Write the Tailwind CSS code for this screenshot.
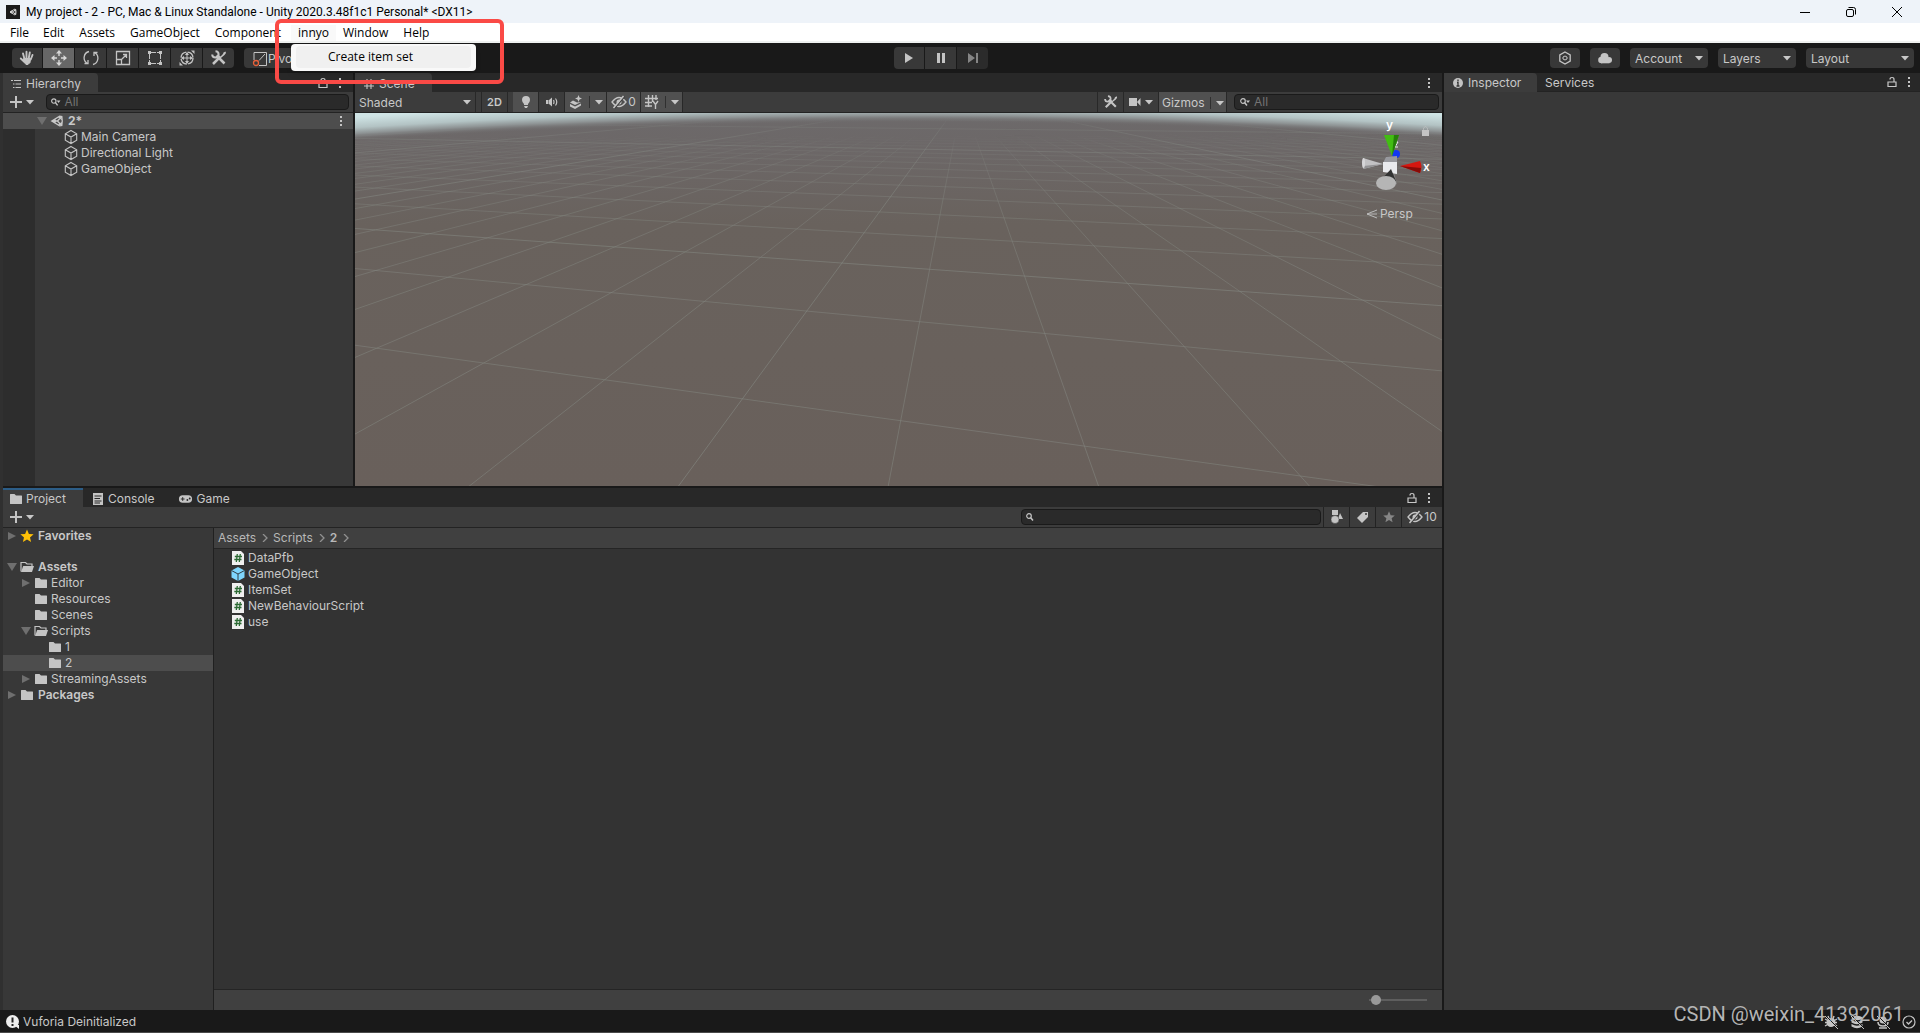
<!DOCTYPE html>
<html lang="en">
<head>
    <meta charset="UTF-8">
    <meta name="viewport" content="width=device-width, initial-scale=1.0">
    <title>My project - 2 - PC, Mac & Linux Standalone - Unity 2020.3.48f1c1 Personal* <DX11></title>
    <script src="https://cdn.jsdelivr.net/npm/@tailwindcss/browser@4"></script>
</head>
<body class="flex h-screen min-w-[1200px] flex-col overflow-hidden bg-[#191919] font-['Inter',sans-serif] text-[12px] leading-4 text-[#c8c8c8]">

    <!-- Icons -->
    <svg class="hidden">
        <symbol id="unity" viewBox="0 0 16 16"><path d="M2 8 11 2.500 13.500 3 14 8 13.500 13 11 13.500ZM2 8H8.500M8.500 8 12.800 3.500M8.500 8 12.800 12.500M5 5.500 6.500 8 5 10.500M10 3.500 14 6.500M10 12.500 14 9.500" fill="none" stroke="currentColor" stroke-width="1.500"/></symbol>
        <symbol id="folder" viewBox="0 0 16 16"><path d="M2 3.500Q2 3 2.500 3H6.500L8 4.500H13.500Q14 4.500 14 5V12.500Q14 13 13.500 13H2.500Q2 13 2 12.500Z" fill="#c4c4c4"/></symbol>
        <symbol id="folder-open" viewBox="0 0 16 16"><path d="M2 12.500V3.500H6.500L8 5H13V7" fill="none" stroke="#c4c4c4" stroke-width="1.200"/><path d="M4.200 7H15L13 13H2Z" fill="#c4c4c4"/></symbol>
        <symbol id="caret" viewBox="0 0 8 8"><path d="M0 2H8L4 6.500Z" fill="currentColor"/></symbol>
        <symbol id="arrow-right" viewBox="0 0 8 10"><path d="M0 1 8 5 0 9Z" fill="#6f6f6f"/></symbol>
        <symbol id="arrow-down" viewBox="0 0 10 8"><path d="M0 0H10L5 8Z" fill="#6f6f6f"/></symbol>
        <symbol id="cube" viewBox="0 0 16 16"><path d="M8 1.500 13.700 4.700V11.300L8 14.500 2.300 11.300V4.700ZM2.300 4.700 8 8 13.700 4.700M8 8V14.500" fill="none" stroke="#c4c4c4" stroke-width="1.100"/></symbol>
        <symbol id="prefab" viewBox="0 0 16 16"><path d="M8 1 14.500 4.500V11.500L8 15 1.500 11.500V4.500Z" fill="#7fd6fd"/><path d="M1.500 4.500 8 8 14.500 4.500M8 8V15" fill="none" stroke="#303e46"/></symbol>
        <symbol id="script" viewBox="0 0 16 16"><path d="M2 1H11L14 4V15H2Z" fill="#efefef"/><path d="M7.300 4 6.300 12M10.300 4 9.300 12M4.800 6.500H12M4.300 9.500H11.500" stroke="#2c6b34" stroke-width="1.300"/></symbol>
        <symbol id="lock" viewBox="0 0 10 12"><path d="M1 6H9V10.500H1ZM3 3.500Q3 1.500 5 1.500T7 3.500V6" fill="none" stroke="currentColor" stroke-width="1.200"/></symbol>
        <symbol id="dots" viewBox="0 0 4 12"><path d="M1 1H3V3H1ZM1 5H3V7H1ZM1 9H3V11H1Z" fill="#c4c4c4"/></symbol>
        <symbol id="plus" viewBox="0 0 12 12"><path d="M6 0V12M0 6H12" stroke="#c4c4c4" stroke-width="2"/></symbol>
        <symbol id="search" viewBox="0 0 12 10"><circle cx="4" cy="4" r="2.300" fill="none" stroke="#c4c4c4" stroke-width="1.200"/><path d="M5.700 5.700 8 8.500" stroke="#c4c4c4" stroke-width="1.500"/></symbol>
        <symbol id="search-drop" viewBox="0 0 12 10"><circle cx="4" cy="4" r="2.300" fill="none" stroke="#c4c4c4" stroke-width="1.200"/><path d="M5.700 5.700 8 8.500" stroke="#c4c4c4" stroke-width="1.500"/><path d="M7 3.500H11L9 6Z" fill="#c4c4c4"/></symbol>
        <symbol id="tools" viewBox="0 0 16 16"><path d="M2 14 9.500 6.500" stroke="#c4c4c4" stroke-width="2.500"/><path d="M9 7 12 4 12.500 2.500 14.500 1.500 15 3 13.500 5 9.800 8" fill="#c4c4c4"/><path d="M5.500 5.500 13.500 13.500" stroke="#c4c4c4" stroke-width="2.500"/><path d="M4.500 1.200A3.200 3.200 0 1 1 1.200 4.500" fill="none" stroke="#c4c4c4" stroke-width="2"/></symbol>
        <symbol id="eye-off" viewBox="0 0 16 16"><path d="M1 8Q4.500 3.500 8 3.500T15 8Q11.500 12.500 8 12.500T1 8Z" fill="none" stroke="#c4c4c4" stroke-width="1.300"/><circle cx="8" cy="8" r="2.500" fill="#c4c4c4"/><path d="M3.500 14.500 13.500 2.500" stroke="#404040" stroke-width="1.500"/><path d="M2.500 14 12.500 2" stroke="#c4c4c4" stroke-width="1.500"/></symbol>
        <symbol id="star" viewBox="0 0 16 16"><path d="M8 1.500 9.900 5.900 14.600 6.300 11 9.400 12.100 14 8 11.500 3.900 14 5 9.400 1.400 6.300 6.100 5.900Z" fill="currentColor"/></symbol>
        <symbol id="grid" viewBox="0 0 12 12"><path d="M4 1V11M8 1V11M1 4H11M1 8H11" stroke="#c4c4c4" stroke-width="1.100"/></symbol>
    </svg>

    <!-- Title Bar -->
    <header class="flex h-[23px] shrink-0 items-center bg-[#eef3f9] pl-[6px] text-black">
        <span class="mr-[6px] flex h-[14px] w-[14px] items-center justify-center bg-[#1b1b1b]"><svg class="h-2 w-2 text-white"><use href="#unity"/></svg></span>
        <h1 class="pt-px font-['Roboto',sans-serif] text-[12px]">My project - 2 - PC, Mac &amp; Linux Standalone - Unity 2020.3.48f1c1 Personal* &lt;DX11&gt;</h1>
        <div class="ml-auto flex">
            <button aria-label="Minimize" class="flex h-5 w-[46px] items-center justify-center"><svg class="h-3 w-3" viewBox="0 0 12 12"><path d="M1 6.500H11" stroke="#000"/></svg></button>
            <button aria-label="Restore" class="flex h-5 w-[46px] items-center justify-center"><svg class="h-3 w-3" viewBox="0 0 12 12" fill="none" stroke="#000"><rect x="1.500" y="3.500" width="7" height="7" rx="1.500"/><path d="M3.500 1.500H8.500Q10.500 1.500 10.500 3.500V8.500"/></svg></button>
            <button aria-label="Close" class="flex h-5 w-[46px] items-center justify-center"><svg class="h-3 w-3" viewBox="0 0 12 12"><path d="M1 1 11 11M11 1 1 11" stroke="#000"/></svg></button>
        </div>
    </header>

    <!-- Menu Bar -->
    <nav class="relative z-20 flex h-5 shrink-0 items-center border-b-2 border-[#eff1f0] bg-white pt-[2px] pl-[3px] font-['Open_Sans','Noto_Sans',sans-serif] text-[12px] text-black">
        <button class="px-[7px]">File</button>
        <button class="px-[7px]">Edit</button>
        <button class="px-[8px]">Assets</button>
        <button class="px-[7px]">GameObject</button>
        <button class="px-[8px]">Component</button>
        <div class="relative ml-[2px]">
            <button class="bg-[#f9f9f9] px-[7px]">innyo</button>
            <div class="absolute top-[19px] left-0 h-[27px] w-[185px] rounded bg-[#f9f9f9] px-[5px] pt-[2px] shadow-md">
                <button class="h-[22px] w-full rounded bg-[#f0f0f0] pl-8 text-left">Create item set</button>
            </div>
        </div>
        <button class="px-[7px]">Window</button>
        <button class="px-[8px]">Help</button>
        <!-- Highlight frame -->
        <div class="pointer-events-none absolute -top-1 left-[275px] h-[65px] w-[229px] rounded-md border-4 border-[#fa4a46]"></div>
    </nav>

    <!-- Toolbar -->
    <div class="flex h-[30px] shrink-0 items-center justify-between pr-[6px] pl-3">
        <div class="flex flex-1 items-center">
            <div class="flex gap-px">
                <button aria-label="Hand" class="flex h-5 w-[30px] items-center justify-center rounded-l-sm bg-[#383838]"><svg class="h-4 w-4" viewBox="0 0 16 16" stroke="#c4c4c4" stroke-linecap="round" fill="none"><path d="M5.500 9 4 3.500M7.500 8V1.800M9.800 8 10.800 2.500M11.700 9.500 13.500 5M5 11.500 1.800 8.500" stroke-width="1.900"/><path d="M5 8.500H11.500L11 12.500 9 14.500H7L4.500 11.500Z" fill="#c4c4c4"/></svg></button>
                <button aria-label="Move" class="flex h-5 w-[31px] items-center justify-center bg-[#676767]"><svg class="h-4 w-4" viewBox="0 0 16 16"><path d="M8 3V6M8 10V13M3 8H6M10 8H13" stroke="#d8d8d8" stroke-width="1.400"/><path d="M8 0 11 3.500H5ZM8 16 5 12.500H11ZM0 8 3.500 5V11ZM16 8 12.500 11V5Z" fill="#d8d8d8"/></svg></button>
                <button aria-label="Rotate" class="flex h-5 w-[31px] items-center justify-center bg-[#383838]"><svg class="h-4 w-4" viewBox="0 0 16 16" fill="none" stroke="#c4c4c4" stroke-width="1.300"><path d="M6 1.500A6.500 6.500 0 0 0 4.500 13.500M1.500 13.500H5V10M10 14.500A6.500 6.500 0 0 0 11.500 2.500M14.500 2.500H11V6"/></svg></button>
                <button aria-label="Scale" class="flex h-5 w-[31px] items-center justify-center bg-[#383838]"><svg class="h-4 w-4" viewBox="0 0 16 16" fill="none" stroke="#c4c4c4" stroke-width="1.300"><path d="M1.500 1.500H14.500V14.500H1.500ZM1.500 9.500H6.500V14.500M7 9 11.500 4.500M8 4.500H11.500V8"/></svg></button>
                <button aria-label="Rect" class="flex h-5 w-[31px] items-center justify-center bg-[#383838]"><svg class="h-4 w-4" viewBox="0 0 16 16"><path d="M2.500 3V13M13.500 3V13M3 2.500H13M3 13.500H13" stroke="#c4c4c4" stroke-dasharray="6 1"/><path d="M1 1H4V4H1ZM12 1H15V4H12ZM1 12H4V15H1ZM12 12H15V15H12Z" fill="#c4c4c4"/></svg></button>
                <button aria-label="Transform" class="flex h-5 w-[31px] items-center justify-center bg-[#383838]"><svg class="h-4 w-4" viewBox="0 0 16 16" fill="none" stroke="#c4c4c4"><circle cx="8" cy="8" r="6" stroke-width="1.300" stroke-dasharray="8 1.400"/><path d="M8 3V13M3 8H13"/><path d="M8 2 10 5H6ZM8 14 6 11H10ZM2 8 5 6V10ZM14 8 11 10V6ZM12 .500H15.500V4ZM.500 12V15.500H4Z" fill="#c4c4c4" stroke="none"/></svg></button>
                <button aria-label="Custom tools" class="flex h-5 w-[31px] items-center justify-center rounded-r-sm bg-[#383838]"><svg class="h-4 w-4"><use href="#tools"/></svg></button>
            </div>
            <button class="ml-[10px] flex h-5 w-[72px] items-center rounded-sm bg-[#383838] pt-px pl-2"><svg class="h-4 w-4" viewBox="0 0 16 16" fill="none" stroke="#c4c4c4"><path d="M2 9V1.500H14.500V14.500H7M7 9.500 13 3"/><circle cx="4" cy="12" r="2.500" stroke="#e8613a" stroke-width="1.300"/></svg>Pivot</button>
        </div>
        <div class="mr-11 flex gap-px">
            <button aria-label="Play" class="flex h-[22px] w-[30px] items-center justify-center rounded-l-sm bg-[#383838]"><svg class="h-[10px] w-2" viewBox="0 0 8 10"><path d="M0 0 8 5 0 10Z" fill="#c4c4c4"/></svg></button>
            <button aria-label="Pause" class="flex h-[22px] w-[31px] items-center justify-center bg-[#383838]"><svg class="h-[10px] w-2" viewBox="0 0 8 10"><path d="M0 0H3V10H0ZM5 0H8V10H5Z" fill="#c4c4c4"/></svg></button>
            <button aria-label="Step" class="flex h-[22px] w-[31px] items-center justify-center rounded-r-sm bg-[#2b2b2b]"><svg class="h-[10px] w-[10px]" viewBox="0 0 10 10"><path d="M0 0 7 5 0 10ZM8 0H10V10H8Z" fill="#858585"/></svg></button>
        </div>
        <div class="flex flex-1 items-center justify-end gap-[10px]">
            <button aria-label="Package" class="flex h-5 w-[30px] items-center justify-center rounded-sm bg-[#383838]"><svg class="h-[14px] w-[14px]" viewBox="0 0 14 14" fill="none" stroke="#c4c4c4"><path d="M7 1 12.200 4V10L7 13 1.800 10V4Z" stroke-width="1.300"/><path d="M7 5 9 6V8L7 9 5 8V6Z"/></svg></button>
            <button aria-label="Cloud" class="flex h-5 w-[30px] items-center justify-center rounded-sm bg-[#383838]"><svg class="h-4 w-4" viewBox="0 0 16 16" fill="#c4c4c4"><circle cx="4.500" cy="10" r="3.300"/><circle cx="7.500" cy="7" r="4"/><circle cx="12" cy="10" r="3"/><rect x="4" y="9" width="8.500" height="4.300"/></svg></button>
            <div class="relative flex items-center"><select aria-label="Account" class="h-5 w-[78px] appearance-none rounded-sm bg-[#383838] pt-px pl-[5px]"><option>Account</option></select><svg class="pointer-events-none absolute right-[5px] h-2 w-2"><use href="#caret"/></svg></div>
            <div class="relative flex items-center"><select aria-label="Layers" class="h-5 w-[78px] appearance-none rounded-sm bg-[#383838] pt-px pl-[5px]"><option>Layers</option></select><svg class="pointer-events-none absolute right-[5px] h-2 w-2"><use href="#caret"/></svg></div>
            <div class="relative flex items-center"><select aria-label="Layout" class="h-5 w-[108px] appearance-none rounded-sm bg-[#383838] pt-px pl-[5px]"><option>Layout</option></select><svg class="pointer-events-none absolute right-[5px] h-2 w-2"><use href="#caret"/></svg></div>
        </div>
    </div>

    <!-- Docked Panels -->
    <main class="flex min-h-0 flex-1 gap-[2px] border-l-[3px] border-[#303030]">
        <div class="flex min-w-0 flex-[1439_1_0%] flex-col gap-[2px]">
            <div class="flex min-h-0 flex-[413_1_0%] gap-[2px]">

                <!-- Hierarchy -->
                <section class="flex w-[350px] shrink-0 flex-col bg-[#383838]">
                    <div class="flex h-[19px] items-center bg-[#282828] pr-[11px]">
                        <h2 class="flex h-full w-[95px] items-center rounded-tr-sm bg-[#3c3c3c] pt-[2px] pl-2"><svg class="mr-[5px] h-[10px] w-[10px]" viewBox="0 0 10 10"><path d="M0 1.500H2M3 1.500H10M2 5H3.500M4.500 5H10M2 8.500H3.500M4.500 8.500H10" stroke="#c4c4c4"/></svg>Hierarchy</h2>
                        <svg class="mr-[10px] ml-auto h-3 w-[10px]"><use href="#lock"/></svg>
                        <svg class="h-3 w-1"><use href="#dots"/></svg>
                    </div>
                    <div class="flex h-[21px] items-center border-b border-[#232323] bg-[#3c3c3c] pr-1 pl-[7px]">
                        <button aria-label="Create" class="flex items-center gap-1"><svg class="h-3 w-3"><use href="#plus"/></svg><svg class="h-2 w-2"><use href="#caret"/></svg></button>
                        <label class="ml-[12px] flex h-4 flex-1 items-center rounded border border-[#1a1a1a] bg-[#2a2a2a] pl-[3px]"><svg class="mr-[3px] h-[10px] w-3"><use href="#search-drop"/></svg><input type="text" aria-label="Search hierarchy" placeholder="All" class="w-full leading-[14px] outline-none placeholder:text-[#747474]"></label>
                    </div>
                    <div class="relative flex-1 before:absolute before:top-0 before:bottom-0 before:w-8 before:bg-[#2d2d2d]">
                        <div class="relative flex h-4 items-center bg-[#4d4d4d] pr-[10px] pl-[34px] font-bold"><svg class="mr-[3px] h-2 w-[10px]"><use href="#arrow-down"/></svg><svg class="mr-[4px] h-[14px] w-[14px]"><use href="#unity"/></svg>2*<svg class="ml-auto h-3 w-1"><use href="#dots"/></svg></div>
                        <ul class="relative pl-[60px]">
                            <li class="flex h-4 items-center gap-[2px]"><svg class="h-4 w-4"><use href="#cube"/></svg>Main Camera</li>
                            <li class="flex h-4 items-center gap-[2px]"><svg class="h-4 w-4"><use href="#cube"/></svg>Directional Light</li>
                            <li class="flex h-4 items-center gap-[2px]"><svg class="h-4 w-4"><use href="#cube"/></svg>GameObject</li>
                        </ul>
                    </div>
                </section>

                <!-- Scene -->
                <section class="flex min-w-0 flex-1 flex-col bg-[#383838]">
                    <div class="flex h-[19px] shrink-0 items-center bg-[#282828] pr-[11px]">
                        <h2 class="flex h-full w-[77px] items-center rounded-tr-sm bg-[#3c3c3c] pt-[2px] pl-2"><svg class="mr-1 h-3 w-3"><use href="#grid"/></svg>Scene</h2>
                        <svg class="ml-auto h-3 w-1"><use href="#dots"/></svg>
                    </div>
                    <div class="flex h-[21px] shrink-0 border-b border-[#232323] bg-[#3c3c3c]">
                        <div class="relative flex items-center"><select aria-label="Draw mode" class="h-5 w-[121px] appearance-none border-r border-[#282828] pt-px pl-1"><option>Shaded</option></select><svg class="pointer-events-none absolute right-[5px] h-2 w-2"><use href="#caret"/></svg></div>
                        <button class="ml-[5px] w-[27px] border-x border-[#282828] text-[11px] font-semibold">2D</button>
                        <button aria-label="Lighting" class="ml-[5px] flex w-[26px] items-center justify-center border-r border-[#282828] bg-[#505050]"><svg class="h-3 w-3" viewBox="0 0 12 12"><path d="M6 0A4 4 0 0 1 10 4Q10 6 8 8V9H4V8Q2 6 2 4A4 4 0 0 1 6 0ZM4 10H8L7 12H5Z" fill="#c4c4c4"/></svg></button>
                        <button aria-label="Audio" class="flex w-[26px] items-center justify-center border-r border-[#282828]"><svg class="h-3 w-3" viewBox="0 0 12 12"><path d="M0 4H2.500V8H0ZM3 4 6 1.500V10.500L3 8Z" fill="#c4c4c4"/><path d="M7.500 4Q8.500 6 7.500 8M9.500 2.500Q12 6 9.500 9.500" stroke="#c4c4c4" stroke-width="1.200" fill="none"/></svg></button>
                        <button aria-label="Effects" class="flex w-[42px] items-center border-r border-[#282828] bg-[#505050] pl-1"><svg class="h-[14px] w-[14px]" viewBox="0 0 14 14"><path d="M1 7.500 4 5.500 8 7.500 12 7 6 10ZM1 9 6 11.500 12 8.500V10.500L6 14 1 11.500Z" fill="#c4c4c4"/><path d="M9.500 0 10.500 2.500 13 3.500 10.500 4.500 9.500 7 8.500 4.500 6 3.500 8.500 2.500Z" fill="#c4c4c4"/></svg><span class="mr-[5px] ml-[6px] h-3 w-px bg-[#303030]"></span><svg class="h-2 w-2"><use href="#caret"/></svg></button>
                        <button class="flex w-[34px] items-center justify-center gap-px border-r border-[#282828] bg-[#505050]"><svg class="h-4 w-4"><use href="#eye-off"/></svg>0</button>
                        <button aria-label="Grid axis" class="flex w-[42px] items-center border-r border-[#282828] bg-[#505050] pl-1"><svg class="h-[14px] w-[14px]" viewBox="0 0 14 14"><path d="M3.500 0V12M7.500 0V7M11 0V5M0 3.500H13M0 7.500H7M0 11H7M8 6 10.500 9.500 13 6M10.500 9.500V14" fill="none" stroke="#c4c4c4" stroke-width="1.400"/></svg><span class="mr-[5px] ml-[6px] h-3 w-px bg-[#303030]"></span><svg class="h-2 w-2"><use href="#caret"/></svg></button>
                        <button aria-label="Component tools" class="ml-auto flex w-[27px] items-center justify-center border-x border-[#282828]"><svg class="h-[14px] w-[14px]"><use href="#tools"/></svg></button>
                        <button aria-label="Camera" class="flex w-[35px] items-center justify-center gap-1 border-r border-[#282828]"><svg class="h-3 w-3" viewBox="0 0 12 12"><path d="M0 2H8V10H0ZM8 6 11.500 2V10Z" fill="#c4c4c4"/></svg><svg class="h-2 w-2"><use href="#caret"/></svg></button>
                        <button class="flex w-[68px] items-center border-r border-[#282828] bg-[#505050] pt-px pl-[3px]">Gizmos<span class="mx-[5px] h-3 w-px bg-[#303030]"></span><svg class="h-2 w-2 shrink-0"><use href="#caret"/></svg></button>
                        <label class="mt-[2px] mr-[3px] ml-[7px] flex h-4 w-[205px] items-center rounded border border-[#1a1a1a] bg-[#2a2a2a] pl-1"><svg class="mr-[3px] h-[10px] w-3 shrink-0"><use href="#search-drop"/></svg><input type="text" aria-label="Search scene" placeholder="All" class="w-full leading-[14px] outline-none placeholder:text-[#747474]"></label>
                    </div>
                    <div class="relative min-h-0 flex-1 overflow-hidden">
                        <svg class="h-full w-full" viewBox="0 0 1087 373" preserveAspectRatio="xMidYMid slice">
                            <defs>
                                <linearGradient id="ground" x1="0" y1="0" x2="0" y2="1"><stop offset="0" stop-color="#6d6a6b"/><stop offset=".1" stop-color="#6c6767"/><stop offset=".3" stop-color="#69625d"/><stop offset="1" stop-color="#69605b"/></linearGradient>
                                <radialGradient id="sky" gradientUnits="userSpaceOnUse" cx="560" cy="8680" r="8700"><stop offset=".9966" stop-color="#6d6a6b" stop-opacity="0"/><stop offset=".9974" stop-color="#8d9293"/><stop offset=".9981" stop-color="#b3c3c4"/><stop offset=".9993" stop-color="#cfe4e5"/></radialGradient>
                            </defs>
                            <rect width="1087" height="373" fill="url(#ground)"/>
                            <g id="floorGrid" stroke="#8c938c" fill="none"></g>
                            <rect width="1087" height="40" fill="url(#sky)"/>
                        </svg>
                        <!-- Orientation gizmo -->
                        <svg class="absolute top-0 right-0 h-[120px] w-[92px]" viewBox="0 0 92 120">
                            <path d="M13 45 33 51 13 56Z" fill="#c2c2c4"/><path d="M13 53 33 51 13 56Z" fill="#929294"/><ellipse cx="13.500" cy="50" rx="1.500" ry="5" fill="#d6d6d8"/>
                            <path d="M44 60 47 71 38 75Z" fill="#858585"/>
                            <circle cx="46" cy="41" r="4" fill="#1238ef"/><path d="M45 29H48L45 34H48" stroke="#eee" fill="none"/>
                            <path d="M36 44 47 43 47 49 33 50Z" fill="#98999e"/><path d="M33 49H47V61L33 59Z" fill="#e9eaed"/>
                            <path d="M34 22H49L42 43Z" fill="#42bd13"/><path d="M44 22H49L42 43Z" fill="#257f09"/>
                            <path d="M50 53 70 48Q73 54 70 60Z" fill="#d51710"/><path d="M50 53 71 55 70 60Z" fill="#870b08"/>
                            <path d="M41 56 46 68 30 68Z" fill="#333"/><ellipse cx="36" cy="70" rx="10" ry="7" fill="#b5b5b5"/>
                            <text x="36" y="16" fill="#fff" font-family="Inter" font-size="12" font-weight="600">y</text>
                            <text x="73" y="58" fill="#fff" font-family="Inter" font-size="12" font-weight="600">x</text>
                            <path d="M72 17H79V23H72Z" fill="#c4c4c4"/><path d="M73.500 17V15Q75.500 12 77.500 15V17" fill="none" stroke="#c4c4c4" stroke-opacity=".6"/>
                            <path d="M27 97 17 101 27 105M17 101H27" fill="none" stroke="#bbb"/>
                            <text x="30" y="105" fill="#c8c8c8" font-family="Inter" font-size="12">Persp</text>
                        </svg>
                    </div>
                </section>
            </div>

            <!-- Project -->
            <section class="flex min-h-0 flex-[522_1_0%] flex-col bg-[#383838]">
                <div class="flex h-[19px] shrink-0 items-center bg-[#282828] pr-[11px]">
                    <button class="flex h-full w-20 items-center border-t-2 border-[#2c5d87] bg-[#3c3c3c] pl-[5px]"><svg class="mr-[2px] h-4 w-4"><use href="#folder"/></svg>Project</button>
                    <button class="flex h-full items-center pt-[2px] pl-[9px]"><svg class="mr-1 h-3 w-3" viewBox="0 0 12 12"><path d="M1 0H11V12H1Z" fill="#c4c4c4"/><path d="M2.500 3H9.500M2.500 5.500H8M2.500 8H9.500M2.500 10H8" stroke="#282828"/></svg>Console</button>
                    <button class="flex h-full items-center pt-[2px] pl-6"><svg class="mr-[3px] h-4 w-[15px]" viewBox="0 0 16 16"><rect x="1" y="4" width="14" height="8" rx="4" fill="#c4c4c4"/><path d="M3 8H7M5 6V10" stroke="#282828"/><circle cx="10" cy="9" r="1" fill="#282828"/><circle cx="12.500" cy="7.500" r="1" fill="#282828"/></svg>Game</button>
                    <svg class="mr-[10px] ml-auto h-3 w-[10px]"><use href="#lock"/></svg>
                    <svg class="h-3 w-1"><use href="#dots"/></svg>
                </div>
                <div class="flex h-[21px] shrink-0 border-b border-[#232323] bg-[#3c3c3c] pl-[7px]">
                    <button aria-label="Add asset" class="flex items-center gap-1"><svg class="h-3 w-3"><use href="#plus"/></svg><svg class="h-2 w-2"><use href="#caret"/></svg></button>
                    <label class="mt-[2px] ml-auto flex h-4 w-[300px] items-center rounded border border-[#1a1a1a] bg-[#2a2a2a] pl-[3px]"><svg class="mr-1 h-[10px] w-3 shrink-0"><use href="#search"/></svg><input type="text" aria-label="Search project" class="w-full leading-[14px] outline-none"></label>
                    <button aria-label="Filter by type" class="ml-[2px] flex w-[26px] items-center justify-center border-l border-[#232323]"><svg class="h-[14px] w-[14px]" viewBox="0 0 14 14" fill="#c4c4c4"><path d="M2 0H8V5H2ZM10 3 13 9H8Z"/><circle cx="5" cy="9.500" r="4" stroke="#3c3c3c" stroke-width=".500"/></svg></button>
                    <button aria-label="Filter by label" class="flex w-[26px] items-center justify-center border-l border-[#232323]"><svg class="h-3 w-3" viewBox="0 0 12 12"><path d="M6 1H11V6L5 12 0 7Z" fill="#c4c4c4"/><circle cx="9" cy="3" r="1" fill="#383838"/></svg></button>
                    <button aria-label="Save search" class="flex w-[26px] items-center justify-center border-l border-[#232323] text-[#868686]"><svg class="h-[14px] w-[14px]"><use href="#star"/></svg></button>
                    <button class="flex w-[41px] items-center justify-center gap-px border-l border-[#232323]"><svg class="h-4 w-4"><use href="#eye-off"/></svg>10</button>
                </div>
                <div class="flex min-h-0 flex-1">
                    <ul class="w-[211px] shrink-0 border-r border-[#202020]">
                        <li class="flex h-4 items-center pl-[5px] font-semibold"><svg class="mr-[3px] h-[10px] w-2"><use href="#arrow-right"/></svg><svg class="mr-[3px] h-4 w-4 text-[#ffc107]"><use href="#star"/></svg>Favorites</li>
                        <li class="mt-[15px] flex h-4 items-center pl-1 font-semibold"><svg class="mr-[2px] h-2 w-[10px]"><use href="#arrow-down"/></svg><svg class="mr-[3px] h-4 w-4"><use href="#folder-open"/></svg>Assets</li>
                        <li class="flex h-4 items-center pl-[19px]"><svg class="mr-[3px] h-[10px] w-2"><use href="#arrow-right"/></svg><svg class="mr-[2px] h-4 w-4"><use href="#folder"/></svg>Editor</li>
                        <li class="flex h-4 items-center pl-[30px]"><svg class="mr-[2px] h-4 w-4"><use href="#folder"/></svg>Resources</li>
                        <li class="flex h-4 items-center pl-[30px]"><svg class="mr-[2px] h-4 w-4"><use href="#folder"/></svg>Scenes</li>
                        <li class="flex h-4 items-center pl-[18px]"><svg class="mr-[2px] h-2 w-[10px]"><use href="#arrow-down"/></svg><svg class="mr-[2px] h-4 w-4"><use href="#folder-open"/></svg>Scripts</li>
                        <li class="flex h-4 items-center pl-[44px]"><svg class="mr-[2px] h-4 w-4"><use href="#folder"/></svg>1</li>
                        <li class="flex h-4 items-center bg-[#4d4d4d] pl-[44px]"><svg class="mr-[2px] h-4 w-4"><use href="#folder"/></svg>2</li>
                        <li class="flex h-4 items-center pl-[19px]"><svg class="mr-[3px] h-[10px] w-2"><use href="#arrow-right"/></svg><svg class="mr-[2px] h-4 w-4"><use href="#folder"/></svg>StreamingAssets</li>
                        <li class="flex h-4 items-center pl-[5px] font-semibold"><svg class="mr-[3px] h-[10px] w-2"><use href="#arrow-right"/></svg><svg class="mr-[3px] h-4 w-4"><use href="#folder"/></svg>Packages</li>
                    </ul>
                    <div class="flex min-w-0 flex-1 flex-col bg-[#333333]">
                        <div class="flex h-[21px] shrink-0 items-center border-b border-[#252525] bg-[#404040] pl-1 text-[#b8b8b8]">
                            <a href="#">Assets</a>
                            <svg class="mr-[5px] ml-[6px] h-2 w-[6px]" viewBox="0 0 6 8"><path d="M1 0 5 4 1 8" fill="none" stroke="#909090" stroke-width="1.300"/></svg>
                            <a href="#">Scripts</a>
                            <svg class="mr-[5px] ml-[6px] h-2 w-[6px]" viewBox="0 0 6 8"><path d="M1 0 5 4 1 8" fill="none" stroke="#909090" stroke-width="1.300"/></svg>
                            <a href="#" class="font-semibold">2</a>
                            <svg class="mr-[5px] ml-[6px] h-2 w-[6px]" viewBox="0 0 6 8"><path d="M1 0 5 4 1 8" fill="none" stroke="#909090" stroke-width="1.300"/></svg>
                        </div>
                        <ul class="flex-1 pt-px pl-4">
                            <li class="flex h-4 items-center gap-[2px]"><svg class="h-4 w-4"><use href="#script"/></svg>DataPfb</li>
                            <li class="flex h-4 items-center gap-[2px]"><svg class="h-4 w-4"><use href="#prefab"/></svg>GameObject</li>
                            <li class="flex h-4 items-center gap-[2px]"><svg class="h-4 w-4"><use href="#script"/></svg>ItemSet</li>
                            <li class="flex h-4 items-center gap-[2px]"><svg class="h-4 w-4"><use href="#script"/></svg>NewBehaviourScript</li>
                            <li class="flex h-4 items-center gap-[2px]"><svg class="h-4 w-4"><use href="#script"/></svg>use</li>
                        </ul>
                        <div class="flex h-[21px] shrink-0 items-center justify-end border-t border-[#252525] bg-[#404040] pr-[15px]">
                            <input type="range" min="0" max="100" value="4" aria-label="Icon size" class="h-[2px] w-[58px] appearance-none bg-[#5e5e5e] [&::-webkit-slider-thumb]:h-[10px] [&::-webkit-slider-thumb]:w-[10px] [&::-webkit-slider-thumb]:appearance-none [&::-webkit-slider-thumb]:rounded-full [&::-webkit-slider-thumb]:bg-[#999999]">
                        </div>
                    </div>
                </div>
            </section>
        </div>

        <!-- Inspector -->
        <section class="flex min-w-0 flex-[476_1_0%] flex-col bg-[#383838]">
            <div class="flex h-[19px] items-center border-b border-[#232323] bg-[#282828] pr-[9px]">
                <button class="flex h-[19px] w-[93px] items-center rounded-tr-sm bg-[#3c3c3c] pt-[2px] pl-[9px]"><svg class="mr-[5px] h-[10px] w-[10px]" viewBox="0 0 10 10"><circle cx="5" cy="5" r="5" fill="#c4c4c4"/><path d="M5 1.500V3.200M4 4.500H5V8M3.500 8H6.500" stroke="#333" stroke-width="1.300" fill="none"/></svg>Inspector</button>
                <button class="pt-[2px] pl-2">Services</button>
                <svg class="mr-[10px] ml-auto h-3 w-[10px]"><use href="#lock"/></svg>
                <svg class="h-3 w-1"><use href="#dots"/></svg>
            </div>
        </section>
    </main>

    <!-- Status Bar -->
    <footer class="relative flex h-[23px] shrink-0 items-center border-b border-[#4a4a4a] pt-px pr-1 pl-[6px]">
        <svg class="mr-1 h-[14px] w-[13px]" viewBox="0 0 13 14"><circle cx="6.500" cy="6.500" r="6.500" fill="#eee"/><path d="M8 10H13V14Z" fill="#eee"/><path d="M6.500 2.500V7.500M6.500 9V11" stroke="#222" stroke-width="2"/></svg>
        Vuforia Deinitialized
        <div class="ml-auto flex items-center gap-3 text-[#c4c4c4]">
            <button aria-label="Debugger"><svg class="block h-[14px] w-[14px]" viewBox="0 0 14 14"><circle cx="7" cy="7.500" r="4.500" fill="#c4c4c4"/><path d="M1 4 13 11M1 11 13 4M4 1 5 4M10 1 9 4M1 7.500H13" stroke="#c4c4c4" stroke-width="1.400"/><path d="M2 1 14 13" stroke="#191919"/><path d="M1 1 14 14" stroke="#c4c4c4"/></svg></button>
            <button aria-label="Cache server"><svg class="block h-[14px] w-[14px]" viewBox="0 0 14 14"><ellipse cx="7" cy="3" rx="5.500" ry="2.200" fill="#c4c4c4"/><path d="M1.500 5Q7 8.500 12.500 5V7.500Q7 11 1.500 7.500ZM1.500 9Q7 12.500 12.500 9V11.500Q7 15 1.500 11.500Z" fill="#c4c4c4"/><path d="M2 1 14 13" stroke="#191919"/><path d="M1 1 14 14" stroke="#c4c4c4"/></svg></button>
            <button aria-label="Auto lighting"><svg class="block h-[14px] w-[14px]" viewBox="0 0 14 14"><circle cx="7" cy="5" r="3.500" fill="#c4c4c4"/><path d="M2 7Q2 11 7 11T12 7M3 13H11" stroke="#c4c4c4" stroke-width="1.600" fill="none"/><path d="M2 1 14 13" stroke="#191919"/><path d="M1 1 14 14" stroke="#c4c4c4"/></svg></button>
            <button aria-label="Progress"><svg class="block h-[14px] w-[14px]" viewBox="0 0 14 14" fill="none" stroke="#c4c4c4"><circle cx="7" cy="7" r="6" stroke-width="1.200"/><path d="M4.500 7 6.500 9 10 5.500" stroke-width="1.400"/></svg></button>
        </div>
        <span class="pointer-events-none absolute right-4 bottom-[6px] font-['Roboto',sans-serif] text-[20px] leading-6 text-[#b4b4b4]">CSDN @weixin_41392061</span>
    </footer>

    <script>
        // Perspective floor grid: i runs across the view, j runs away from the camera
        const floorGrid = document.getElementById("floorGrid");
        const depth = (i, j) => 1 - 0.0745 * i + 0.4447 * j;

        function project(i, j) {
            const d = depth(i, j);
            return [(129.4 * i + 270 * j + 545.7) / d, (0.6 * i - 6.2 * j + 307.7) / d];
        }

        function addSegment(i1, j1, i2, j2, major) {
            const d = Math.min(depth(i1, j1), depth(i2, j2));
            if (d < 0.2) return;
            const alpha = major ? 0.5 * (1 - d / 18) : 0.45 * (1 - d / 9);
            if (alpha <= 0) return;
            const [x1, y1] = project(i1, j1);
            const [x2, y2] = project(i2, j2);
            if (Math.max(x1, x2) < 0 || Math.min(x1, x2) > 1087) return;
            const line = document.createElementNS("http://www.w3.org/2000/svg", "line");
            line.setAttribute("x1", x1);
            line.setAttribute("y1", y1);
            line.setAttribute("x2", x2);
            line.setAttribute("y2", y2);
            line.setAttribute("stroke-opacity", alpha.toFixed(3));
            floorGrid.appendChild(line);
        }

        for (let i = -61; i <= 40; i++) {
            for (let j = -2; j <= 42; j++) {
                addSegment(i, j, i, j + 1, (i + 1) % 10 === 0);
                addSegment(i, j, i + 1, j, (j - 2) % 10 === 0);
            }
        }
    </script>
</body>
</html>
